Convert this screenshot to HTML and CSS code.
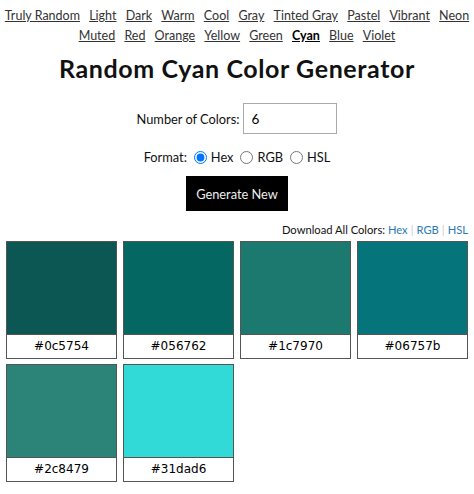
FILE: index.html
```html
<!DOCTYPE html>
<html lang="en">
<head>
  <meta charset="UTF-8" />
  <meta name="viewport" content="width=device-width, initial-scale=1" />
  <title>Random Cyan Color Generator</title>
  <link rel="stylesheet" href="styles.css">
</head>
<body>
<nav class="types">
  <a href="#">Truly Random</a>
  <a href="#">Light</a>
  <a href="#">Dark</a>
  <a href="#">Warm</a>
  <a href="#">Cool</a>
  <a href="#">Gray</a>
  <a href="#">Tinted Gray</a>
  <a href="#">Pastel</a>
  <a href="#">Vibrant</a>
  <a href="#">Neon</a>
  <a href="#">Muted</a>
  <a href="#">Red</a>
  <a href="#">Orange</a>
  <a href="#">Yellow</a>
  <a href="#">Green</a>
  <a href="#" class="current">Cyan</a>
  <a href="#">Blue</a>
  <a href="#">Violet</a>
</nav>

<h1>Random Cyan Color Generator</h1>

<form class="options">
  <div class="field">
    <label for="count">Number of Colors:</label>
    <input id="count" type="text" value="6">
  </div>
  <div class="field format">
    <span>Format:</span>
    <label><input type="radio" name="fmt" checked> Hex</label>
    <label><input type="radio" name="fmt"> RGB</label>
    <label><input type="radio" name="fmt"> HSL</label>
  </div>
  <button type="button" class="generate">Generate New</button>
</form>

<div class="download">
  Download All Colors: <a href="#">Hex</a><span class="sep">|</span><a href="#">RGB</a><span class="sep">|</span><a href="#">HSL</a>
</div>

<div class="swatches">
  <div class="swatch"><div class="chip" style="background:#0c5754"></div><div class="code">#0c5754</div></div>
  <div class="swatch"><div class="chip" style="background:#056762"></div><div class="code">#056762</div></div>
  <div class="swatch"><div class="chip" style="background:#1c7970"></div><div class="code">#1c7970</div></div>
  <div class="swatch"><div class="chip" style="background:#06757b"></div><div class="code">#06757b</div></div>
  <div class="swatch"><div class="chip" style="background:#2c8479"></div><div class="code">#2c8479</div></div>
  <div class="swatch"><div class="chip" style="background:#31dad6"></div><div class="code">#31dad6</div></div>
</div>
</body>
</html>
```

FILE: styles.css
```css
body {
  margin: 0;
  padding: 6px 6px 0;
  background: #fff;
  color: #111;
  font-family: Lato, "Open Sans", sans-serif;
  font-size: 12.8px;
}
.types {
  margin: 0 -6px;
  text-align: center;
  line-height: 20px;
  font-size: 12.5px;
}
.types a {
  color: #333;
  margin: 0 3px;
}
.types a.current {
  font-weight: bold;
  color: #000;
}
h1 {
  text-align: center;
  font-family: Lato, sans-serif;
  font-weight: bold;
  font-size: 25px;
  letter-spacing: 0.6px;
  margin: 7px 0 20px;
}
.options {
  display: flex;
  flex-direction: column;
  align-items: center;
  gap: 11px;
}
.field {
  display: flex;
  align-items: center;
  gap: 4px;
}
.field input[type=text] {
  width: 78px;
  height: 29px;
  padding: 0 7px;
  border: 1px solid #aaa;
  font: inherit;
  font-size: 13.5px;
}
.format {
  margin-top: 4px;
}
.format label {
  display: flex;
  align-items: center;
  gap: 2px;
}
.format input {
  margin: 0 2px 0 3px;
}
.generate {
  width: 102px;
  height: 35px;
  background: #000;
  color: #eee;
  border: none;
  font: inherit;
}
.download {
  text-align: right;
  font-size: 11.2px;
  margin: 12px 0 5px;
}
.download a {
  color: #2a7ab3;
  text-decoration: none;
}
.download .sep {
  color: #ccc;
  margin: 0 3px;
}
.swatches {
  display: grid;
  grid-template-columns: repeat(4, 1fr);
  gap: 5px 6px;
}
.swatch {
  border: 1px solid #555;
}
.chip {
  height: 92px;
  border-bottom: 1px solid #555;
}
.code {
  height: 23px;
  line-height: 23px;
  text-align: center;
  font-family: "DejaVu Sans", sans-serif;
  font-size: 12px;
  color: #000;
}
```
